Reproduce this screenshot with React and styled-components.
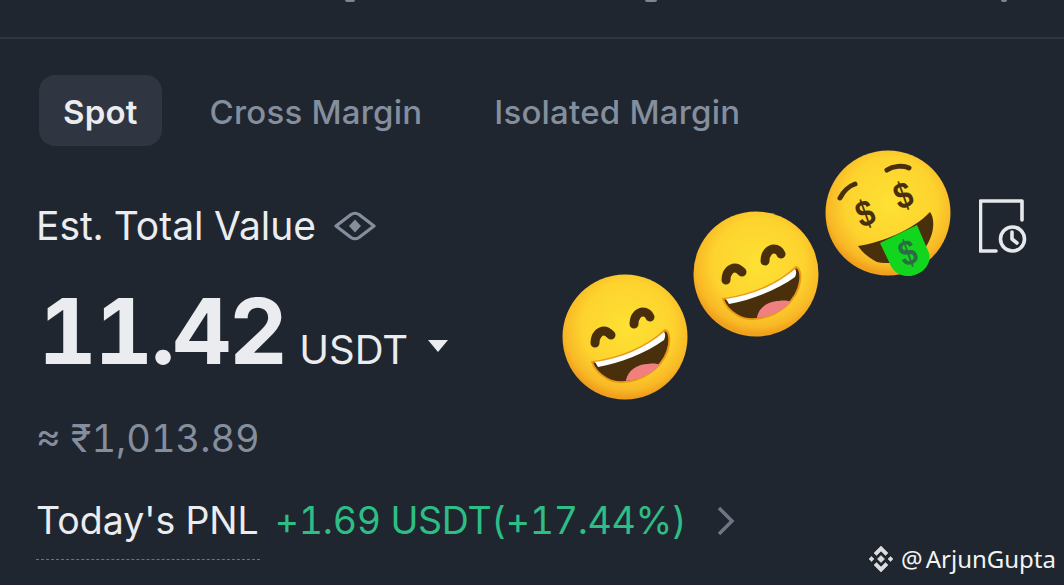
import React from "react";
import styled, { createGlobalStyle } from "styled-components";

const Global = createGlobalStyle`
  html, body { margin: 0; padding: 0; background: #1f2630; }
`;

const Page = styled.div`
  position: relative;
  width: 1064px;
  height: 585px;
  overflow: hidden;
  background: #1f2630;
  font-family: "Inter", "Open Sans", sans-serif;
  font-variant-numeric: tabular-nums;
  color: #eaecef;
`;

const TopStrip = styled.div`
  height: 37px;
  border-bottom: 2px solid #2f3642;
  display: flex;
  align-items: flex-start;
`;

const Crumb = styled.span`
  width: ${(p) => p.$w}px;
  margin-left: ${(p) => p.$gap}px;
  height: 2px;
  border-radius: 0 0 8px 8px;
  background: #7d8694;
`;

const Body = styled.div`
  padding: 36px 40px 0 36px;
`;

const Tabs = styled.div`
  display: flex;
  align-items: center;
  margin-left: 3px;
  gap: 24px;
`;

const Tab = styled.div`
  height: 71px;
  padding: 2px 24px 0;
  box-sizing: border-box;
  display: flex;
  align-items: center;
  border-radius: 16px;
  background: ${(p) => (p.$active ? "#2f3541" : "transparent")};
  color: ${(p) => (p.$active ? "#eaecef" : "#848e9c")};
  font-size: 33px;
  letter-spacing: 0.2px;
  font-weight: ${(p) => (p.$active ? 600 : 500)};
`;

const Summary = styled.div`
  display: flex;
  justify-content: space-between;
  align-items: flex-start;
  margin-top: 52px;
`;

const Label = styled.div`
  display: flex;
  align-items: center;
  gap: 18px;
  font-size: 39px;
  line-height: 56px;
`;

const HistoryIcon = styled.svg`
  width: 50px;
  height: 56px;
  margin-right: -5px;
  flex: none;
`;

const Balance = styled.div`
  display: flex;
  align-items: baseline;
  margin: 32px 0 0 2px;
  line-height: 90px;
`;

const Amount = styled.span`
  font-size: 91px;
  font-weight: 700;
  letter-spacing: -2.500px;
  color: #eaecef;
  margin-right: 14px;
`;

const Unit = styled.span`
  font-size: 40px;
  margin-right: 20px;
`;

const Caret = styled.span`
  width: 0;
  height: 0;
  margin-top: 10px;
  border-left: 10px solid transparent;
  border-right: 10px solid transparent;
  border-top: 12px solid #eaecef;
  align-self: center;
`;

const Fiat = styled.div`
  margin-top: 18px;
  font-size: 38px;
  line-height: 50px;
  color: #848e9c;
`;

const PnlRow = styled.div`
  display: flex;
  align-items: center;
  gap: 16px;
  margin-top: 33px;
  font-size: 37.500px;
  line-height: 50px;
`;

const PnlLabel = styled.span`
  color: #eaecef;
`;

const PnlValue = styled.span`
  color: #2ebd85;
  letter-spacing: -0.300px;
`;

const Chevron = styled.svg`
  width: 20px;
  height: 30px;
  margin-left: 14px;
`;

const Dotted = styled.div`
  width: 224px;
  margin-top: 13px;
  border-top: 1px dashed #6b7280;
`;

const Emoji = styled.svg`
  position: absolute;
  left: ${(p) => p.$x}px;
  top: ${(p) => p.$y}px;
  width: 126px;
  height: 126px;
`;

const Watermark = styled.div`
  position: absolute;
  right: 8px;
  bottom: 12px;
  display: flex;
  align-items: center;
  gap: 7px;
  font-family: "Noto Sans", sans-serif;
  font-size: 24px;
  word-spacing: -3px;
  line-height: 28px;
  color: #f2f3f4;
`;

function FaceDefs({ id }) {
  return (
    <defs>
      <radialGradient id={id} cx="52%" cy="42%" r="56%">
        <stop offset="0%" stopColor="#fee133" />
        <stop offset="65%" stopColor="#fdd32e" />
        <stop offset="90%" stopColor="#f8b826" />
        <stop offset="100%" stopColor="#f0a01c" />
      </radialGradient>
    </defs>
  );
}

function GrinEmoji({ x, y, id }) {
  return (
    <Emoji $x={x} $y={y} viewBox="0 0 126 126">
      <FaceDefs id={id} />
      <circle cx="63" cy="63" r="62.500" fill={`url(#${id})`} />
      <path d="M33 69C33 61 38 57 42 57C45 57 47 59 49 61" fill="none" stroke="#4a2f0c" strokeWidth="9" strokeLinecap="round" />
      <path d="M72 50C72 42 77 38 81 38C84 38 87 40 88 43" fill="none" stroke="#4a2f0c" strokeWidth="9" strokeLinecap="round" />
      <path d="M30 88C55 85 85 74 103 56C110 58 110 80 93 95C78 108 56 112 44 104C37 100 32 94 30 88Z" fill="#4a2f0c" stroke="#ea9a14" strokeWidth="2" />
      <path d="M33 88C57 85 84 74 102 58C104 60 103 64 102 66C84 79 58 89 36 93Z" fill="#fff" />
      <path d="M64 106C66 96 76 90 86 90C92 89 96 90 98 91C92 98 78 106 64 107Z" fill="#f08080" />
    </Emoji>
  );
}

function MoneyEmoji({ x, y, id }) {
  const dollar = { textAnchor: "middle", fontFamily: "'Liberation Sans', sans-serif", fontWeight: 700 };
  return (
    <Emoji $x={x} $y={y} viewBox="0 0 126 126">
      <FaceDefs id={id} />
      <circle cx="63" cy="63" r="62.500" fill={`url(#${id})`} />
      <path d="M15 48C18 42 24 36 30 34" fill="none" stroke="#4a2f0c" strokeWidth="5" strokeLinecap="round" />
      <path d="M62 20C68 16 78 15 84 18" fill="none" stroke="#4a2f0c" strokeWidth="5" strokeLinecap="round" />
      <text x="0" y="13" transform="translate(40 63) rotate(-20) scale(0.85 1)" fontSize="37" fill="#4a2f0c" {...dollar}>$</text>
      <text x="0" y="13" transform="translate(78 45) rotate(-20) scale(0.85 1)" fontSize="37" fill="#4a2f0c" {...dollar}>$</text>
      <path d="M33 96C58 92 88 80 105 62C110 68 110 84 100 98C88 108 66 116 52 112C44 108 37 102 33 96Z" fill="#4a2f0c" />
      <path d="M55 93L92 75L104 103C107 114 98 124 86 126C76 127 68 122 65 114Z" fill="#12d61e" />
      <text x="0" y="12" transform="translate(83 103) rotate(-20) scale(0.85 1)" fontSize="36" fill="#2b6b45" {...dollar}>$</text>
    </Emoji>
  );
}

export default function App() {
  return (
    <Page>
      <Global />
      <TopStrip>
        <Crumb $w={10} $gap={345} />
        <Crumb $w={12} $gap={290} />
        <Crumb $w={6} $gap={344} />
      </TopStrip>
      <Body>
        <Tabs>
          <Tab $active>Spot</Tab>
          <Tab>Cross Margin</Tab>
          <Tab>Isolated Margin</Tab>
        </Tabs>
        <Summary>
          <Label>
            Est. Total Value
            <svg width="42" height="30" viewBox="0 0 42 30">
              <path d="M2 15L17 3.500Q21 1 25 3.500L40 15L25 26.500Q21 29 17 26.500L2 15Z" fill="none" stroke="#848e9c" strokeWidth="3.200" strokeLinejoin="round" />
              <path d="M21 8.500L27 15L21 21.500L15 15Z" fill="#848e9c" />
            </svg>
          </Label>
          <HistoryIcon viewBox="0 0 50 56" fill="none" stroke="#e6e8ea" strokeWidth="3.600" strokeLinecap="round" strokeLinejoin="round">
            <path d="M43 22V3H1.500V53H17" />
            <circle cx="33.500" cy="41" r="12" />
            <path d="M33 34V41L38 45" />
          </HistoryIcon>
        </Summary>
        <Balance>
          <Amount>11.42</Amount>
          <Unit>USDT</Unit>
          <Caret />
        </Balance>
        <Fiat>≈ ₹1,013.89</Fiat>
        <PnlRow>
          <PnlLabel>Today's PNL</PnlLabel>
          <PnlValue>+1.69 USDT(+17.44%)</PnlValue>
          <Chevron viewBox="0 0 20 30" fill="none" stroke="#6f7683" strokeWidth="3.500">
            <path d="M3 2L16 15L3 28" />
          </Chevron>
        </PnlRow>
        <Dotted />
      </Body>
      <GrinEmoji x={562} y={274} id="g1" />
      <GrinEmoji x={693} y={211} id="g2" />
      <MoneyEmoji x={825} y={150} id="g3" />
      <Watermark>
        <svg width="26" height="28" viewBox="0 0 26 28" fill="#dcdcdc" stroke="#dcdcdc" strokeWidth="0.600">
          <path d="M13 1L20 8L17.500 10.500L13 6L8.500 10.500L6 8Z" />
          <path d="M13 27L20 20L17.500 17.500L13 22L8.500 17.500L6 20Z" />
          <path d="M13 10.500L16.500 14L13 17.500L9.500 14Z" />
          <path d="M3.500 11.500L6 14L3.500 16.500L1 14Z" />
          <path d="M22.500 11.500L25 14L22.500 16.500L20 14Z" />
        </svg>
        <span>@ ArjunGupta</span>
      </Watermark>
    </Page>
  );
}
